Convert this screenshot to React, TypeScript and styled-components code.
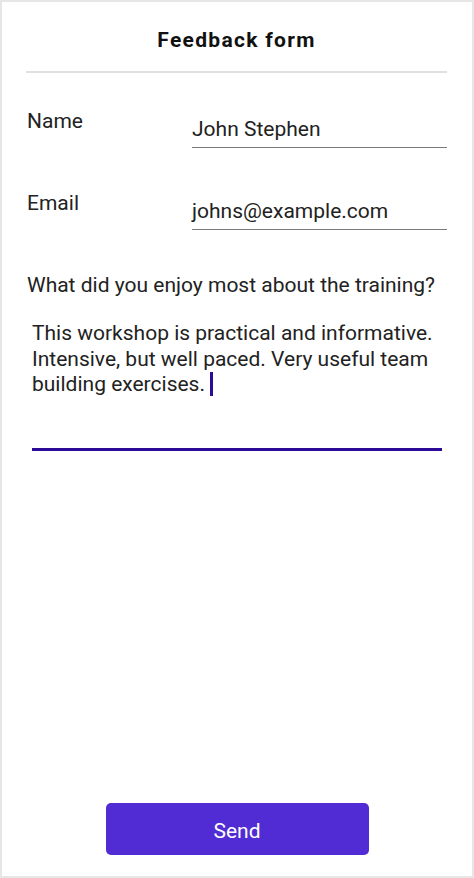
import React from "react";
import styled, { createGlobalStyle } from "styled-components";

const Global = createGlobalStyle`
  html, body { margin: 0; padding: 0; background: #ffffff; }
  body { font-family: Roboto, "Noto Sans", "Liberation Sans", sans-serif; }
  * { box-sizing: border-box; }
`;

const Frame = styled.div`
  height: 878px;
  border: 2px solid #e6e6e6;
  background: #ffffff;
  display: flex;
  flex-direction: column;
  color: #222222;
`;

const Header = styled.header`
  padding: 26px 25px 0 24px;
`;

const Title = styled.h1`
  margin: 0;
  text-align: center;
  font-size: 21px;
  line-height: 24px;
  font-weight: 700;
  letter-spacing: 1.3px;
  color: #111111;
`;

const Divider = styled.hr`
  margin: 19px 0 0;
  border: 0;
  height: 2px;
  background: #e0e0e0;
`;

const Form = styled.form`
  flex: 1;
  display: flex;
  flex-direction: column;
  padding: 36px 25px 21px 25px;
`;

const Row = styled.div<{ $gap?: number }>`
  display: grid;
  grid-template-columns: 165px 1fr;
  align-items: start;
  margin-bottom: ${(p) => p.$gap ?? 43}px;
`;

const Label = styled.label`
  font-size: 21px;
  line-height: 24px;
  color: #222222;
`;

const Entry = styled.div`
  margin-top: 8px;
  padding-bottom: 6px;
  font-size: 21px;
  line-height: 24px;
  color: #222222;
  border-bottom: 1.5px solid #7a7a7a;
`;

const Question = styled.p`
  margin: 0 0 24px;
  font-size: 21px;
  line-height: 24px;
  color: #222222;
`;

const Editor = styled.div`
  margin: 0 5px;
  height: 130px;
  font-size: 21px;
  line-height: 25.5px;
  color: #222222;
  border-bottom: 3px solid #2b0b98;
`;

const Caret = styled.span`
  display: inline-block;
  width: 3px;
  height: 24px;
  margin-left: 5px;
  background: #2b0b98;
  vertical-align: -5px;
`;

const Spacer = styled.div`
  flex: 1;
`;

const SendButton = styled.button`
  align-self: center;
  width: 263px;
  height: 52px;
  padding: 3px 0 0;
  border: 0;
  border-radius: 5px;
  background: #512bd4;
  color: #ffffff;
  font-family: inherit;
  font-size: 21px;
  cursor: pointer;
`;

export default function App() {
  return (
    <>
      <Global />
      <Frame>
        <Header>
          <Title>Feedback form</Title>
          <Divider />
        </Header>
        <Form onSubmit={(e) => e.preventDefault()}>
          <Row>
            <Label>Name</Label>
            <Entry>John Stephen</Entry>
          </Row>
          <Row>
            <Label>Email</Label>
            <Entry>johns@example.com</Entry>
          </Row>
          <Question>What did you enjoy most about the training?</Question>
          <Editor role="textbox">
            This workshop is practical and informative. Intensive, but well paced. Very useful team building exercises.
            <Caret />
          </Editor>
          <Spacer />
          <SendButton type="submit">Send</SendButton>
        </Form>
      </Frame>
    </>
  );
}
